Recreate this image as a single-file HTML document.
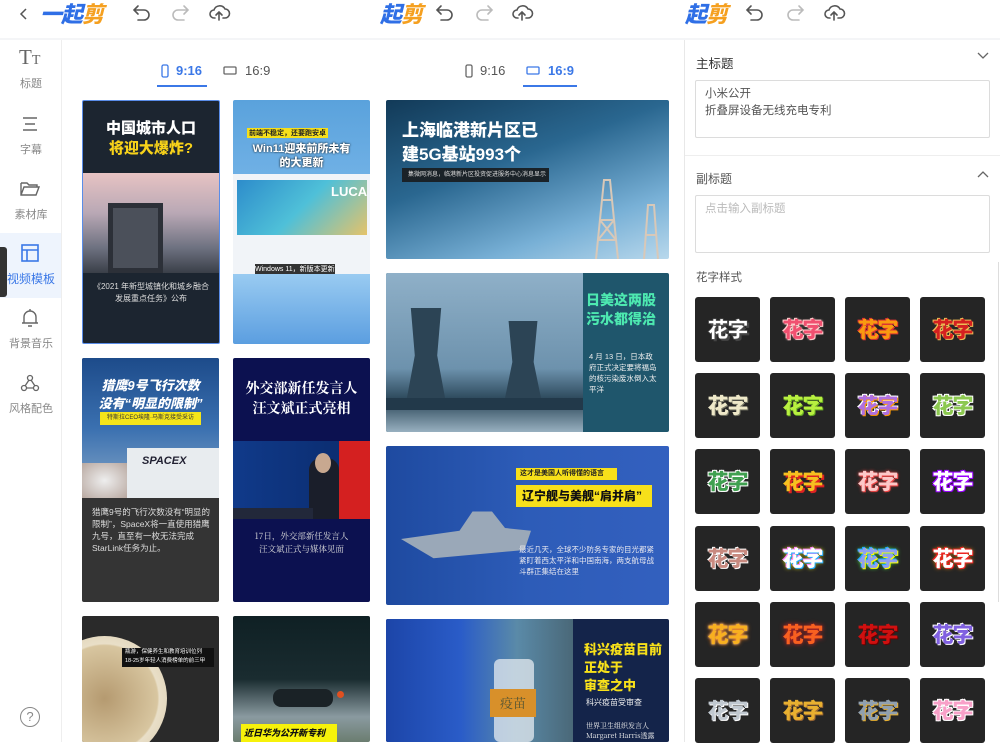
<!DOCTYPE html>
<html><head><meta charset="utf-8">
<style>
*{margin:0;padding:0;box-sizing:border-box}
body{width:1000px;height:742px;overflow:hidden;background:#fff;font-family:"Liberation Sans","Noto Sans CJK SC",sans-serif;position:relative;color:#333}
.a{position:absolute}
.t{position:absolute;white-space:nowrap}
.logo{font-weight:900;font-size:22px;font-style:italic;letter-spacing:-1px;font-family:"Noto Sans CJK SC",sans-serif}
.side .lbl{position:absolute;left:0;width:62px;text-align:center;font-size:11px;color:#888}
.card{position:absolute;overflow:hidden;border-radius:2px}
.tile{position:absolute;width:65px;height:65px;background:#252525;border-radius:3px;font-weight:900;font-size:21px;line-height:65px;text-align:center;font-family:"Noto Sans CJK SC",sans-serif;letter-spacing:-1px}
.ta{position:absolute;border:1px solid #dcdcdc;border-radius:2px;font-size:11.5px;line-height:17px;padding:5px 9px;color:#555}
</style></head><body>

<!-- top bars -->
<div class="a" style="left:0;top:38px;width:1000px;height:2px;background:#f4f5f7"></div>
<svg class="a" style="left:17px;top:7px" width="14" height="14" viewBox="0 0 14 14"><path d="M9 2 L4 7 L9 12" fill="none" stroke="#555" stroke-width="1.5"/></svg>
<div class="t logo" style="left:40px;top:-3px;color:#2f6fe6">一起<span style="color:#f5a020">剪</span></div>
<div class="t logo" style="left:380px;top:-3px;color:#2f6fe6">起<span style="color:#f5a020">剪</span></div>
<div class="t logo" style="left:685px;top:-3px;color:#2f6fe6">起<span style="color:#f5a020">剪</span></div>

<svg width="0" height="0" style="position:absolute"><defs>
<g id="undo"><path d="M6 4 L2 8 L6 12 M2 8 H12 a5 5 0 0 1 0 10 H6" fill="none" stroke-width="1.6" stroke-linecap="round"/></g>
<g id="redo"><path d="M14 4 L18 8 L14 12 M18 8 H8 a5 5 0 0 0 0 10 H14" fill="none" stroke-width="1.6" stroke-linecap="round"/></g>
<g id="up"><path d="M6 16 H5 a4 4 0 0 1 0-8 a6 6 0 0 1 11-1 a4.5 4.5 0 0 1 0 9 H14 M10 18 V10 M7 13 L10 10 L13 13" fill="none" stroke-width="1.6" stroke-linecap="round"/></g>
</defs></svg>
<svg class="a" style="left:132px;top:2px" width="20" height="22"><use href="#undo" stroke="#555"/></svg>
<svg class="a" style="left:170px;top:2px" width="20" height="22"><use href="#redo" stroke="#bbb"/></svg>
<svg class="a" style="left:209px;top:2px" width="22" height="22"><use href="#up" stroke="#555"/></svg>
<svg class="a" style="left:435px;top:2px" width="20" height="22"><use href="#undo" stroke="#555"/></svg>
<svg class="a" style="left:474px;top:2px" width="20" height="22"><use href="#redo" stroke="#bbb"/></svg>
<svg class="a" style="left:512px;top:2px" width="22" height="22"><use href="#up" stroke="#555"/></svg>
<svg class="a" style="left:745px;top:2px" width="20" height="22"><use href="#undo" stroke="#555"/></svg>
<svg class="a" style="left:785px;top:2px" width="20" height="22"><use href="#redo" stroke="#bbb"/></svg>
<svg class="a" style="left:824px;top:2px" width="22" height="22"><use href="#up" stroke="#555"/></svg>

<!-- sidebar -->
<div class="side">
<div class="a" style="left:61px;top:40px;width:1px;height:702px;background:#eee"></div>
<div class="a" style="left:0;top:233px;width:61px;height:65px;background:#eef4fd"></div>
<div class="a" style="left:0;top:247px;width:7px;height:50px;background:#333;border-radius:0 3px 3px 0"></div>
<div class="t" style="left:19px;top:45px;font-family:'Liberation Serif',serif;font-size:21px;color:#666">T<span style="font-size:14px">T</span></div>
<div class="lbl" style="top:75px">标题</div>
<svg class="a" style="left:21px;top:116px" width="18" height="16"><path d="M2 2H16M4 8H14M2 14H16" stroke="#666" stroke-width="1.4"/></svg>
<div class="lbl" style="top:141px">字幕</div>
<svg class="a" style="left:20px;top:181px" width="20" height="16"><path d="M1 2H7L9 4H17V6 M1 2V14H16L19 6H4L1 14" fill="none" stroke="#666" stroke-width="1.4"/></svg>
<div class="lbl" style="top:206px">素材库</div>
<svg class="a" style="left:21px;top:244px" width="18" height="18"><rect x="1" y="1" width="16" height="16" fill="none" stroke="#3b78e7" stroke-width="1.6"/><path d="M1 6H17M6 6V17" stroke="#3b78e7" stroke-width="1.6"/></svg>
<div class="lbl" style="top:270px;color:#3b78e7;font-size:12px">视频模板</div>
<svg class="a" style="left:21px;top:308px" width="18" height="20"><path d="M3 15V9a6 6 0 0 1 12 0v6H3zM1 15H17M9 1V3M7 18H11" fill="none" stroke="#666" stroke-width="1.4"/></svg>
<div class="lbl" style="top:335px">背景音乐</div>
<svg class="a" style="left:20px;top:374px" width="20" height="18"><circle cx="10" cy="4" r="2.5" fill="none" stroke="#666" stroke-width="1.3"/><circle cx="4" cy="14" r="2.5" fill="none" stroke="#666" stroke-width="1.3"/><circle cx="16" cy="14" r="2.5" fill="none" stroke="#666" stroke-width="1.3"/><path d="M9 6L5 12M11 6L15 12M6.5 14H13.5" stroke="#666" stroke-width="1.3"/></svg>
<div class="lbl" style="top:400px">风格配色</div>
<div class="a" style="left:20px;top:707px;width:20px;height:20px;border:1.5px solid #888;border-radius:50%;text-align:center;font-size:13px;line-height:17px;color:#888">?</div>
</div>

<!-- panel1 tabs -->
<svg class="a" style="left:161px;top:64px" width="8" height="14"><rect x="1" y="1" width="6" height="12" rx="1.5" fill="none" stroke="#3b78e7" stroke-width="1.3"/></svg>
<div class="t" style="left:176px;top:63px;font-size:13px;color:#3b78e7;font-weight:bold">9:16</div>
<div class="a" style="left:157px;top:85px;width:50px;height:2px;background:#3b78e7"></div>
<svg class="a" style="left:223px;top:66px" width="14" height="10"><rect x="1" y="1" width="12" height="7" rx="1" fill="none" stroke="#666" stroke-width="1.3"/></svg>
<div class="t" style="left:245px;top:63px;font-size:13px;color:#555">16:9</div>

<!-- panel2 tabs -->
<svg class="a" style="left:465px;top:64px" width="8" height="14"><rect x="1" y="1" width="6" height="12" rx="1.5" fill="none" stroke="#666" stroke-width="1.3"/></svg>
<div class="t" style="left:480px;top:63px;font-size:13px;color:#555">9:16</div>
<svg class="a" style="left:526px;top:66px" width="14" height="10"><rect x="1" y="1" width="12" height="7" rx="1" fill="none" stroke="#3b78e7" stroke-width="1.3"/></svg>
<div class="t" style="left:548px;top:63px;font-size:13px;color:#3b78e7;font-weight:bold">16:9</div>
<div class="a" style="left:523px;top:85px;width:54px;height:2px;background:#3b78e7"></div>

<!-- panel1 cards -->
<div class="card" style="left:82px;top:100px;width:138px;height:244px;background:#1c2530;border:1px solid #5a8de8">
 <div class="t" style="left:0;width:136px;text-align:center;top:16px;color:#fff;font-weight:900;font-size:15px">中国城市人口</div>
 <div class="t" style="left:0;width:136px;text-align:center;top:36px;color:#f7d21a;font-weight:900;font-size:15px">将迎大爆炸?</div>
 <div class="a" style="left:0;top:72px;width:136px;height:100px;background:linear-gradient(#e7c3c3,#b9a8b5 40%,#6d7180 75%,#3a3f48)"></div>
 <div class="a" style="left:25px;top:102px;width:55px;height:70px;background:#4b505a;border:5px solid #2c3038"></div>
 <div class="t" style="left:0;width:136px;text-align:center;top:180px;color:#ddd;font-size:8px">《2021 年新型城镇化和城乡融合</div>
 <div class="t" style="left:0;width:136px;text-align:center;top:192px;color:#ddd;font-size:8px">发展重点任务》公布</div>
</div>
<div class="card" style="left:233px;top:100px;width:137px;height:244px;background:linear-gradient(#5aa2dc,#6fb0e5 30%,#9ccdf2 70%,#5b9ee0)">
 <div class="t" style="left:14px;top:28px;background:#f7e01a;color:#222;font-size:7px;font-weight:bold;padding:0 2px">前端不稳定，还要跑安卓</div>
 <div class="t" style="left:0;width:137px;text-align:center;top:40px;color:#fff;font-weight:900;font-size:11px;text-shadow:0 0 2px #000">Win11迎来前所未有</div>
 <div class="t" style="left:0;width:137px;text-align:center;top:54px;color:#fff;font-weight:900;font-size:11px;text-shadow:0 0 2px #000">的大更新</div>
 <div class="a" style="left:0;top:74px;width:137px;height:100px;background:#f1f4f8"></div>
 <div class="a" style="left:4px;top:80px;width:130px;height:55px;background:linear-gradient(135deg,#2d8ccb,#4fc0d8 50%,#e5c36a)"></div>
 <div class="t" style="left:98px;top:84px;color:#fff;font-weight:bold;font-size:13px">LUCA</div>
 <div class="t" style="left:22px;top:164px;color:#fff;font-size:7px;background:#333">Windows 11，新版本更新</div>
</div>
<div class="card" style="left:82px;top:358px;width:137px;height:244px;background:#343434">
 <div class="a" style="left:0;top:0;width:137px;height:140px;background:linear-gradient(#1d4b8a,#3a70b0 50%,#8aa9c8)"></div>
 <div class="t" style="left:0;width:137px;text-align:center;top:17px;color:#fff;font-weight:900;font-style:italic;font-size:13px">猎鹰9号飞行次数</div>
 <div class="t" style="left:0;width:137px;text-align:center;top:35px;color:#fff;font-weight:900;font-style:italic;font-size:13px">没有“明显的限制”</div>
 <div class="a" style="left:18px;top:54px;width:101px;height:13px;background:#f5e51a;font-size:6px;color:#333;text-align:center;line-height:13px;white-space:nowrap;overflow:hidden">特斯拉CEO埃隆·马斯克接受采访</div>
 <div class="a" style="left:45px;top:90px;width:92px;height:50px;background:#e8ecef"></div>
 <div class="t" style="left:60px;top:97px;color:#223;font-weight:bold;font-size:11px;font-style:italic">SPACEX</div>
 <div class="a" style="left:0;top:105px;width:45px;height:35px;background:radial-gradient(#eee,#b8a8a0)"></div>
 <div class="t" style="left:10px;top:148px;color:#ddd;font-size:8.5px;line-height:12px;white-space:normal;width:125px">猎鹰9号的飞行次数没有“明显的限制”，SpaceX将一直使用猎鹰九号，直至有一枚无法完成StarLink任务为止。</div>
</div>
<div class="card" style="left:233px;top:358px;width:137px;height:244px;background:#0c1150">
 <div class="t" style="left:0;width:137px;text-align:center;top:20px;color:#fff;font-family:'Noto Serif CJK SC',serif;font-weight:bold;font-size:14px">外交部新任发言人</div>
 <div class="t" style="left:0;width:137px;text-align:center;top:40px;color:#fff;font-family:'Noto Serif CJK SC',serif;font-weight:bold;font-size:14px">汪文斌正式亮相</div>
 <div class="a" style="left:0;top:83px;width:137px;height:78px;background:linear-gradient(90deg,#103a8a,#0a2a6a)"></div>
 <div class="a" style="left:106px;top:83px;width:31px;height:78px;background:#d42020"></div>
 <div class="a" style="left:76px;top:100px;width:30px;height:61px;background:#1a1e2a;border-radius:12px 12px 0 0"></div>
 <div class="a" style="left:82px;top:95px;width:16px;height:20px;background:#c8a890;border-radius:50%"></div>
 <div class="a" style="left:0;top:150px;width:80px;height:11px;background:#22283a"></div>
 <div class="t" style="left:0;width:137px;text-align:center;top:172px;color:#ddd;font-family:'Noto Serif CJK SC',serif;font-size:8.5px">17日，外交部新任发言人</div>
 <div class="t" style="left:0;width:137px;text-align:center;top:185px;color:#ddd;font-family:'Noto Serif CJK SC',serif;font-size:8.5px">汪文斌正式与媒体见面</div>
</div>
<div class="card" style="left:82px;top:616px;width:137px;height:126px;background:#2a2a2a">
 <div class="a" style="left:-40px;top:20px;width:125px;height:125px;border-radius:50%;background:radial-gradient(#b59a70,#d8c6a0 60%,#e9dfc8 62%,#d6c7a6)"></div>
 <div class="a" style="left:40px;top:32px;width:92px;height:19px;background:#111;color:#fff;font-size:5.5px;line-height:9px;padding-left:3px;white-space:nowrap;overflow:hidden">瓶游，保健养生和教育培训位列<br>18-25岁年轻人消费榜单的前三甲</div>
</div>
<div class="card" style="left:233px;top:616px;width:137px;height:126px;background:linear-gradient(#0f2024,#1a2c30 50%,#8a9aa0 80%,#6b7d70)">
 <div class="a" style="left:40px;top:73px;width:60px;height:18px;background:#1a2226;border-radius:8px"></div>
 <div class="a" style="left:104px;top:75px;width:7px;height:7px;background:#e05020;border-radius:50%"></div>
 <div class="a" style="left:8px;top:108px;width:96px;height:18px;background:#f7f20a;font-size:9px;font-weight:900;font-style:italic;color:#111;padding-left:3px;line-height:18px">近日华为公开新专利</div>
</div>

<!-- panel2 cards -->
<div class="a" style="left:684px;top:40px;width:1px;height:702px;background:#e8e8e8"></div>
<div class="card" style="left:386px;top:100px;width:283px;height:159px;background:linear-gradient(160deg,#123a58,#2a6790 40%,#78b0d6 75%,#b8d8ec)">
 <div class="t" style="left:16px;top:16px;color:#fff;font-weight:900;font-size:17px">上海临港新片区已</div>
 <div class="t" style="left:16px;top:40px;color:#fff;font-weight:900;font-size:17px">建5G基站993个</div>
 <div class="a" style="left:16px;top:68px;width:147px;height:14px;background:#1a2228;color:#ddd;font-size:6px;line-height:14px;padding-left:6px">集微网消息，临港新片区投资促进服务中心消息显示</div>
 <svg class="a" style="left:190px;top:50px" width="90" height="109"><path d="M20 109 L28 30 L34 30 L42 109 M22 90H40 M24 70H38 M26 50H36 M22 90L38 70 M40 90L24 70 M68 109L72 55H78L82 109 M70 85H80" stroke="#d8c8b8" stroke-width="2" fill="none"/></svg>
</div>
<div class="card" style="left:386px;top:273px;width:283px;height:159px;background:#1f566c">
 <div class="a" style="left:0;top:0;width:197px;height:159px;background:linear-gradient(#8fb0c8,#6d92ad 60%,#2a4658 80%,#98b0c0)"></div>
 <div class="a" style="left:20px;top:35px;width:40px;height:95px;background:#2c4455;clip-path:polygon(12% 0,88% 0,78% 50%,100% 100%,0 100%,22% 50%)"></div>
 <div class="a" style="left:118px;top:48px;width:38px;height:82px;background:#2c4455;clip-path:polygon(12% 0,88% 0,78% 50%,100% 100%,0 100%,22% 50%)"></div>
 <div class="a" style="left:0;top:125px;width:197px;height:12px;background:#22394a"></div>
 <div class="t" style="left:200px;top:17px;color:#4de8b0;font-weight:900;font-size:14px">日美这两股</div>
 <div class="t" style="left:200px;top:36px;color:#4de8b0;font-weight:900;font-size:14px">污水都得治</div>
 <div class="t" style="left:203px;top:78px;color:#eee;font-size:7.5px;line-height:11px">4 月 13 日，日本政<br>府正式决定要将福岛<br>的核污染废水倒入太<br>平洋</div>
</div>
<div class="card" style="left:386px;top:446px;width:283px;height:159px;background:linear-gradient(90deg,#1e4aa0,#2d5cb8 50%,#3360bf)">
 <div class="a" style="left:15px;top:60px;width:130px;height:55px;background:#9aa8b8;clip-path:polygon(0 60%,45% 45%,55% 10%,70% 10%,80% 40%,100% 45%,95% 80%,25% 95%)"></div>
 <div class="a" style="left:130px;top:22px;width:101px;height:12px;background:#f7e01a;font-size:7px;font-weight:bold;color:#222;line-height:12px;padding-left:4px">这才是美国人听得懂的语言</div>
 <div class="a" style="left:130px;top:39px;width:136px;height:22px;background:#f7e01a;font-size:12px;font-weight:900;color:#111;line-height:22px;padding-left:6px">辽宁舰与美舰“肩并肩”</div>
 <div class="t" style="left:133px;top:98px;color:#e8e8f0;font-size:7.5px;line-height:11px">最近几天，全球不少防务专家的目光都紧<br>紧盯着西太平洋和中国南海，两支航母战<br>斗群正集结在这里</div>
</div>
<div class="card" style="left:386px;top:619px;width:283px;height:123px;background:#14244a">
 <div class="a" style="left:0;top:0;width:187px;height:123px;background:linear-gradient(90deg,#1c45a8,#2a5cc8 40%,#5a8aa8 70%,#4a6878)"></div>
 <div class="a" style="left:108px;top:40px;width:40px;height:83px;background:rgba(230,235,240,.75);border-radius:6px"></div>
 <div class="a" style="left:104px;top:70px;width:46px;height:28px;background:#d8902a;color:#553;font-family:'Noto Serif CJK SC',serif;font-size:13px;text-align:center;line-height:28px">疫苗</div>
 <div class="t" style="left:198px;top:22px;color:#f7e01a;font-weight:900;font-size:13px;line-height:18px">科兴疫苗目前<br>正处于<br>审查之中</div>
 <div class="t" style="left:200px;top:78px;color:#eee;font-size:8px">科兴疫苗受审查</div>
 <div class="t" style="left:200px;top:102px;color:#eee;font-family:'Noto Serif CJK SC',serif;font-size:7px;line-height:10px">世界卫生组织发言人<br>Margaret Harris透露</div>
</div>

<!-- right panel -->
<div class="t" style="left:696px;top:53px;font-size:12.5px;color:#333">主标题</div>
<svg class="a" style="left:977px;top:52px" width="12" height="8"><path d="M1 1L6 6L11 1" fill="none" stroke="#666" stroke-width="1.3"/></svg>
<div class="ta" style="left:695px;top:80px;width:295px;height:58px">小米公开<br>折叠屏设备无线充电专利</div>
<div class="a" style="left:685px;top:155px;width:315px;height:1px;background:#eee"></div>
<div class="t" style="left:696px;top:170px;font-size:12px;color:#555">副标题</div>
<svg class="a" style="left:977px;top:170px" width="12" height="8"><path d="M1 7L6 2L11 7" fill="none" stroke="#666" stroke-width="1.3"/></svg>
<div class="ta" style="left:695px;top:195px;width:295px;height:58px;color:#bbb">点击输入副标题</div>
<div class="t" style="left:696px;top:269px;font-size:11.5px;color:#555">花字样式</div>
<div class="a" style="left:998px;top:262px;width:1px;height:340px;background:#ddd"></div>

<div class="tile" style="left:695px;top:297px;color:#fff;-webkit-text-stroke:0.6px #555;text-shadow:2px 2px 0 #444">花字</div>
<div class="tile" style="left:770px;top:297px;color:#f05070;text-shadow:0 0 2px #fcc,1px 1px 0 #fcc,-1px -1px 0 #fcc">花字</div>
<div class="tile" style="left:845px;top:297px;color:#f99a10;text-shadow:1px 1px 0 #d33,-1px -1px 0 #d33">花字</div>
<div class="tile" style="left:920px;top:297px;color:#d42020;text-shadow:1px 1px 0 #eb5,-1px -1px 0 #eb5">花字</div>

<div class="tile" style="left:695px;top:373px;color:#eee8c8;text-shadow:1px 1px 0 #776">花字</div>
<div class="tile" style="left:770px;top:373px;color:#b8f040;text-shadow:1px 1px 0 #6a2">花字</div>
<div class="tile" style="left:845px;top:373px;color:#b070e0;text-shadow:1px 1px 0 #f90,-1px -1px 0 #fff,1px -1px 0 #fff">花字</div>
<div class="tile" style="left:920px;top:373px;color:#8cc850;text-shadow:1px 1px 0 #fff,-1px -1px 0 #fff,1px -1px 0 #fff,-1px 1px 0 #fff">花字</div>

<div class="tile" style="left:695px;top:449px;color:#40a050;text-shadow:1px 1px 0 #fff,-1px -1px 0 #fff,1px -1px 0 #fff,-1px 1px 0 #fff">花字</div>
<div class="tile" style="left:770px;top:449px;color:#f7c020;text-shadow:2px 2px 0 #d22">花字</div>
<div class="tile" style="left:845px;top:449px;color:#fcc8c8;text-shadow:1px 1px 0 #e44,0 0 3px #e44">花字</div>
<div class="tile" style="left:920px;top:449px;color:#fff;text-shadow:1px 1px 0 #90f,-1px -1px 0 #90f,1px -1px 0 #90f,-1px 1px 0 #90f">花字</div>

<div class="tile" style="left:695px;top:526px;color:#c88a80;text-shadow:1px 1px 0 #fff,-1px -1px 0 #fff">花字</div>
<div class="tile" style="left:770px;top:526px;color:#fff;text-shadow:1px 1px 0 #2af,-1px -1px 0 #f8f,0 0 4px #ff0">花字</div>
<div class="tile" style="left:845px;top:526px;color:#90a0f0;text-shadow:1px 1px 0 #ff0,-1px -1px 0 #2af,0 0 4px #4f4">花字</div>
<div class="tile" style="left:920px;top:526px;color:#fff;text-shadow:1px 1px 0 #e22,-1px -1px 0 #e22,0 0 4px #f80">花字</div>

<div class="tile" style="left:695px;top:602px;color:#f8b020;text-shadow:0 0 4px #f70,0 0 2px #fff">花字</div>
<div class="tile" style="left:770px;top:602px;color:#f86020;text-shadow:0 0 5px #d22">花字</div>
<div class="tile" style="left:845px;top:602px;color:#d01010;text-shadow:1px 1px 0 #600">花字</div>
<div class="tile" style="left:920px;top:602px;color:#8060e0;text-shadow:1px 1px 0 #fff,-1px -1px 0 #fff">花字</div>

<div class="tile" style="left:695px;top:678px;color:#c0c8d0;text-shadow:1px 1px 0 #fff">花字</div>
<div class="tile" style="left:770px;top:678px;color:#e8b030;text-shadow:1px 1px 0 #963">花字</div>
<div class="tile" style="left:845px;top:678px;color:#90a0b0;text-shadow:1px 1px 0 #e8b030">花字</div>
<div class="tile" style="left:920px;top:678px;color:#f8a0c8;text-shadow:1px 1px 0 #fff,-1px -1px 0 #fff,1px -1px 0 #fff,-1px 1px 0 #fff">花字</div>

</body></html>
